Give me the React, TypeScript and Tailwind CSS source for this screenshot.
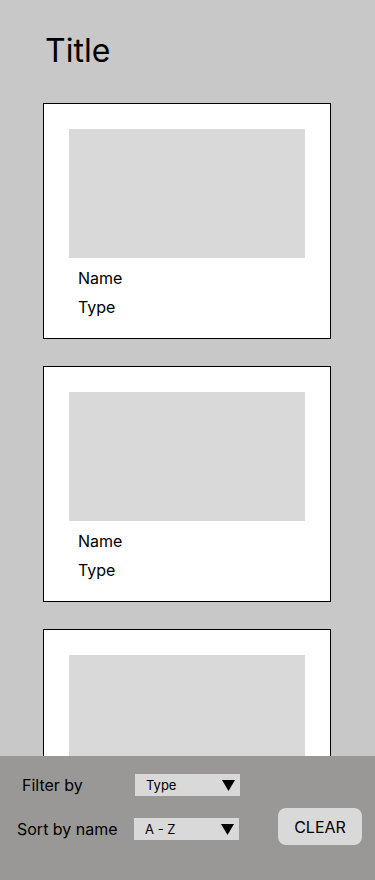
import { useState } from "react";

const items = [
  { name: "Name", type: "Type" },
  { name: "Name", type: "Type" },
  { name: "Name", type: "Type" },
];

function Arrow() {
  return (
    <svg width="13" height="11" viewBox="0 0 13 11" className="shrink-0">
      <polygon points="0,0 13,0 6.5,11" fill="#000" />
    </svg>
  );
}

function Select({ value }: { value: string }) {
  return (
    <div className="flex h-[22px] w-[105px] items-center justify-between bg-[#d9d9d9] pl-[11px] pr-[5px] text-[13px] leading-[16px] text-black">
      <span>{value}</span>
      <Arrow />
    </div>
  );
}

export default function App() {
  const [filter] = useState("Type");
  const [sort] = useState("A - Z");

  return (
    <div
      className="min-h-screen bg-[#c8c8c8] text-black"
      style={{ fontFamily: "Inter, 'Noto Sans', sans-serif" }}
    >
      <div className="px-[43px] pt-[31px] pb-[160px]">
        <h1 className="ml-[2px] text-[32px] leading-[40px] font-normal">Title</h1>

        {/* cards */}
        <div className="mt-[32px] flex flex-col gap-[27px]">
          {items.map((it, i) => (
            <div
              key={i}
              className="h-[236px] w-[288px] border border-black bg-white px-[25px] pt-[25px]"
            >
              <div className="h-[129px] w-full bg-[#d9d9d9]"></div>
              <p className="mt-[10px] ml-[9px] text-[16px] leading-[20px]">{it.name}</p>
              <p className="mt-[9px] ml-[9px] text-[16px] leading-[20px]">{it.type}</p>
            </div>
          ))}
        </div>
      </div>

      {/* barra inferior */}
      <div className="fixed inset-x-0 bottom-0 flex h-[124px] bg-[#999896] text-[16px]">
        <div className="flex flex-col pt-[18px]">
          <div className="flex h-[22px] items-center">
            <span className="ml-[22px] mr-[13px] w-[100px] leading-[20px]">Filter by</span>
            <Select value={filter} />
          </div>
          <div className="mt-[22px] flex h-[22px] items-center">
            <span className="ml-[17px] mr-[17px] w-[100px] leading-[20px] whitespace-nowrap">Sort by name</span>
            <Select value={sort} />
          </div>
        </div>
        <button className="ml-[38px] mt-[52px] h-[37px] w-[84px] rounded-lg bg-[#d9d9d9] text-[16px]">
          CLEAR
        </button>
      </div>
    </div>
  );
}
